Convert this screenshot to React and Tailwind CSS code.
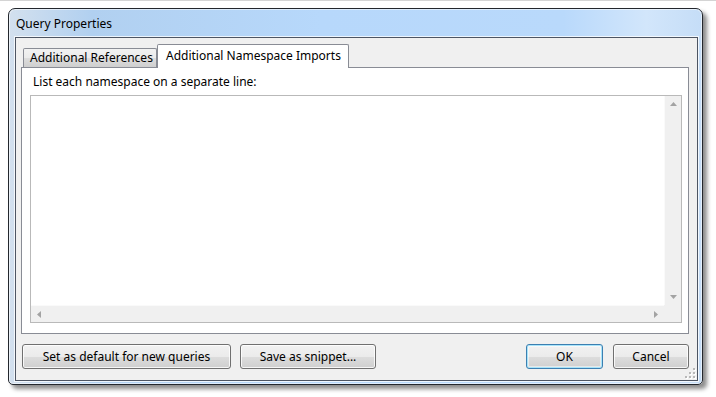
import React from 'react';

const font = "font-['Noto_Sans','Liberation_Sans',sans-serif]";

function Arrow({ dir }) {
  const pts = {
    up: '0,4 3.5,0 7,4',
    down: '0,0 7,0 3.5,4',
    left: '4,0 4,7 0,3.5',
    right: '0,0 4,3.5 0,7',
  }[dir];
  const w = dir === 'up' || dir === 'down' ? 7 : 4;
  const h = dir === 'up' || dir === 'down' ? 4 : 7;
  return (
    <svg width={w} height={h} viewBox={`0 0 ${w} ${h}`}>
      <polygon points={pts} fill="#a3a3a3" />
    </svg>
  );
}

function Button({ children, className = '', primary }) {
  return (
    <button
      className={`h-[25px] rounded-[3px] border text-[12px] text-black bg-[linear-gradient(#f2f2f2_0%,#ebebeb_50%,#dddddd_51%,#cfcfcf_100%)] ${
        primary
          ? 'border-[#3c7fb1] shadow-[inset_0_0_0_1px_#a8e4fa,inset_0_0_0_2px_rgba(255,255,255,0.5)]'
          : 'border-[#707070] shadow-[inset_0_0_0_1px_rgba(255,255,255,0.8)]'
      } ${className}`}
    >
      {children}
    </button>
  );
}

function SizeGrip() {
  const dots = [
    [8, 0],
    [4, 4], [8, 4],
    [0, 8], [4, 8], [8, 8],
  ];
  return (
    <svg width="11" height="11" viewBox="0 0 11 11">
      {dots.map(([x, y]) => (
        <g key={`${x}-${y}`}>
          <rect x={x + 1} y={y + 1} width="2" height="2" fill="#ffffff" />
          <rect x={x} y={y} width="2" height="2" fill="#b8b8b8" />
        </g>
      ))}
    </svg>
  );
}

export default function App() {
  return (
    <div className={`w-[716px] h-[397px] bg-white border-t border-[#d4d4d4] pt-[7px] pl-[8px] ${font}`}>
      <div className="w-[695px] h-[377px] flex flex-col rounded-t-[7px] rounded-b-[5px] border border-[#23272d] bg-[linear-gradient(90deg,#d3e0ee_0%,#b1d0f0_12%,#b7d8fb_45%,#b9d9fb_80%,#d2e6fb_92%,#c5ddf7_100%)] shadow-[4px_4px_4px_rgba(0,0,0,0.45),inset_0_0_0_1px_rgba(255,255,255,0.55)]">
        {/* title bar */}
        <div className="h-[28px] shrink-0 flex items-center pl-[7px] pt-[1px] text-[12px] text-black">
          Query Properties
        </div>

        {/* client area */}
        <div className="relative ml-[6px] mr-[4px] mb-[3px] flex-1 flex flex-col border border-[#4d5563] bg-[#f0f0f0] pt-[6px] pl-[5px] pr-[8px] shadow-[0_0_0_1px_rgba(255,255,255,0.75)]">
          {/* tabs */}
          <div className="flex items-end h-[23px] text-[12px] text-black">
            <div className="ml-[2px] w-[134px] h-[19px] flex items-center pl-[6px] border border-b-0 border-[#898c95] rounded-t-[2px] bg-[linear-gradient(#f2f2f2_0%,#ebebeb_50%,#dddddd_51%,#cfcfcf_100%)] whitespace-nowrap overflow-hidden">
              Additional References
            </div>
            <div className="relative z-10 -mb-px w-[192px] h-[24px] flex items-start pt-[2px] pl-[8px] border border-b-0 border-[#898c95] rounded-t-[2px] bg-white whitespace-nowrap">
              Additional Namespace Imports
            </div>
          </div>

          {/* panel */}
          <div className="w-[668px] h-[267px] border border-[#898c95] bg-white flex flex-col pt-[6px]">
            <div className="pl-[11px] h-[16px] leading-[16px] text-[12px] text-black">
              List each namespace on a separate line:
            </div>
            <div className="mt-[5px] ml-[8px] w-[652px] h-[228px] border border-[#b9b9b9] bg-white grid grid-cols-[1fr_17px] grid-rows-[1fr_17px]">
              <div className="bg-white" />
              <div className="bg-[#f0f0f0] border-l border-[#fafafa] flex flex-col items-center justify-between py-[6px]">
                <Arrow dir="up" />
                <Arrow dir="down" />
              </div>
              <div className="bg-[#f0f0f0] border-t border-[#fafafa] flex items-center justify-between px-[6px]">
                <Arrow dir="left" />
                <Arrow dir="right" />
              </div>
              <div className="bg-[#f0f0f0]" />
            </div>
          </div>

          {/* buttons */}
          <div className="mt-[10px] flex items-center pl-[1px]">
            <Button className="w-[209px]">Set as default for new queries</Button>
            <Button className="ml-[9px] w-[136px]">Save as snippet...</Button>
            <div className="flex-1" />
            <Button primary className="w-[77px]">OK</Button>
            <Button className="ml-[10px] w-[76px]">Cancel</Button>
          </div>

          <div className="absolute right-[1px] bottom-[1px]">
            <SizeGrip />
          </div>
        </div>
      </div>
    </div>
  );
}
